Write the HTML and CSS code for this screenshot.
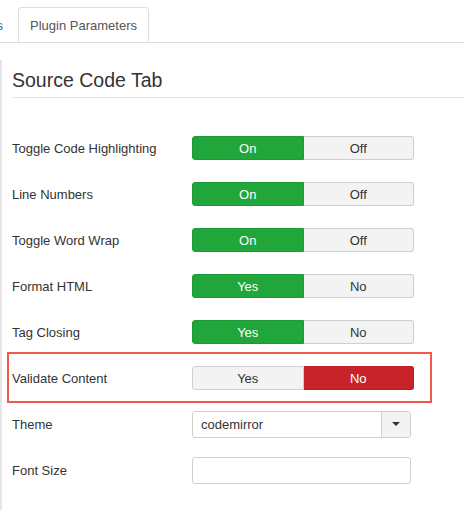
FILE: index.html
```html
<!DOCTYPE html>
<html>
<head>
<meta charset="utf-8">
<link rel="stylesheet" href="styles.css">
</head>
<body>
<div class="tabs">
  <span class="tab-prev"><span class="tab-prev-text">s</span></span>
  <div class="tab active">Plugin Parameters</div>
</div>
<div class="panel">
  <h2 class="heading">Source Code Tab</h2>
  <div class="rows">
    <div class="row">
      <div class="label">Toggle Code Highlighting</div>
      <div class="toggle"><span class="btn on">On</span><span class="btn">Off</span></div>
    </div>
    <div class="row">
      <div class="label">Line Numbers</div>
      <div class="toggle"><span class="btn on">On</span><span class="btn">Off</span></div>
    </div>
    <div class="row">
      <div class="label">Toggle Word Wrap</div>
      <div class="toggle"><span class="btn on">On</span><span class="btn">Off</span></div>
    </div>
    <div class="row">
      <div class="label">Format HTML</div>
      <div class="toggle"><span class="btn on">Yes</span><span class="btn">No</span></div>
    </div>
    <div class="row">
      <div class="label">Tag Closing</div>
      <div class="toggle"><span class="btn on">Yes</span><span class="btn">No</span></div>
    </div>
    <div class="row highlighted">
      <div class="label">Validate Content</div>
      <div class="toggle"><span class="btn">Yes</span><span class="btn off-red">No</span></div>
    </div>
    <div class="row">
      <div class="label">Theme</div>
      <div class="select"><span class="select-text">codemirror</span><span class="select-btn"><span class="caret"></span></span></div>
    </div>
    <div class="row">
      <div class="label">Font Size</div>
      <div class="input"></div>
    </div>
  </div>
</div>
</body>
</html>
```
FILE: styles.css
```css
html, body {
  margin: 0;
  padding: 0;
  background: #fff;
  font-family: "Liberation Sans", Arial, sans-serif;
  color: #333;
}
body {
  width: 464px;
  height: 510px;
  overflow: hidden;
}
.tabs {
  display: flex;
  align-items: flex-end;
  height: 42px;
  border-bottom: 1px solid #ddd;
  overflow: hidden;
}
.tab-prev {
  align-self: center;
  margin-top: 10px;
  width: 3px;
  height: 16px;
  overflow: hidden;
  position: relative;
}
.tab-prev-text {
  position: absolute;
  right: 0;
  top: 0;
  color: #2a6db0;
  font-size: 13px;
  line-height: 16px;
}
.tab {
  margin-left: 15px;
  height: 34px;
  width: 129px;
  border: 1px solid #ddd;
  border-bottom: none;
  border-radius: 4px 4px 0 0;
  background: #fff;
  font-size: 13px;
  color: #555;
  display: flex;
  align-items: center;
  justify-content: center;
  margin-bottom: -1px;
  padding-bottom: 1px;
  position: relative;
}
.panel {
  margin-top: 17px;
  border-left: 2px solid #e6e6e6;
  padding-left: 10px;
  height: 450px;
}
.heading {
  margin: 0;
  padding-top: 8px;
  padding-bottom: 5px;
  font-size: 19.5px;
  line-height: 24px;
  font-weight: normal;
  color: #333;
  border-bottom: 1px solid #e5e5e5;
}
.rows {
  padding-top: 27px;
}
.row {
  display: flex;
  align-items: center;
  height: 46px;
  position: relative;
}
.label {
  width: 180px;
  font-size: 13px;
  color: #333;
}
.toggle {
  display: flex;
  width: 222px;
  height: 24px;
}
.btn {
  flex: 1;
  display: flex;
  align-items: center;
  justify-content: center;
  font-size: 13px;
  color: #333;
  background: #f3f3f3;
  border: 1px solid #cfcfcf;
  box-sizing: border-box;
}
.btn:first-child {
  border-radius: 3px 0 0 3px;
}
.btn:last-child {
  border-radius: 0 3px 3px 0;
  border-left: none;
}
.btn.on {
  background: #21a63b;
  border-color: #1c9a35;
  color: #fff;
}
.btn.off-red {
  background: #c8232b;
  border-color: #b51f26;
  color: #fff;
}
.highlighted::after {
  content: "";
  position: absolute;
  left: -5px;
  top: -3px;
  width: 425px;
  height: 51px;
  border: 2px solid #f2594b;
  box-sizing: border-box;
}
.select {
  display: flex;
  width: 219px;
  height: 27px;
  border: 1px solid #d0d0d0;
  border-radius: 3px;
  box-sizing: border-box;
  background: #fff;
  overflow: hidden;
}
.select-text {
  flex: 1;
  display: flex;
  align-items: center;
  padding-left: 8px;
  font-size: 13px;
  color: #333;
}
.select-btn {
  width: 28px;
  background: #f3f3f3;
  border-left: 1px solid #d0d0d0;
  display: flex;
  align-items: center;
  justify-content: center;
}
.caret {
  width: 0;
  height: 0;
  border-left: 4px solid transparent;
  border-right: 4px solid transparent;
  border-top: 4px solid #333;
}
.input {
  width: 219px;
  height: 27px;
  border: 1px solid #d0d0d0;
  border-radius: 3px;
  box-sizing: border-box;
  background: #fff;
}
```
